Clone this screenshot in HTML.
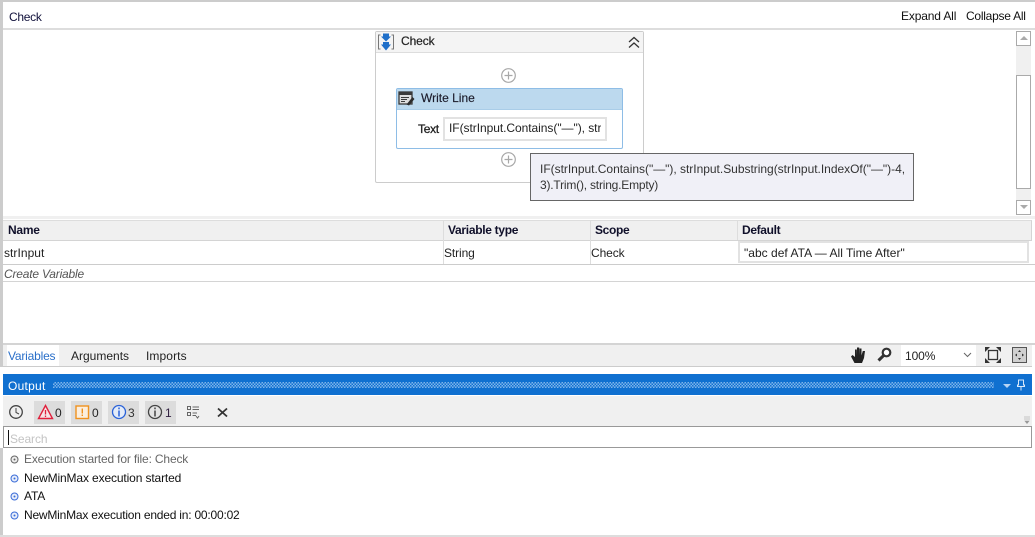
<!DOCTYPE html>
<html><head><meta charset="utf-8"><style>
html,body{margin:0;padding:0;background:#fff}
#p{position:relative;width:1035px;height:537px;overflow:hidden;background:#fff;font:12px "Liberation Sans",sans-serif;color:#111}
#p div,#p svg{position:absolute}
.t{white-space:nowrap;line-height:16px;height:16px}
.b{font-weight:bold}
</style></head><body><div id="p">
<div style="left:0;top:0;width:1035px;height:2px;background:#ccc"></div>
<div style="left:0;top:0;width:3px;height:344px;background:#ccc"></div>
<div style="left:3px;top:28px;width:1032px;height:2px;background:#ddd"></div>
<div class="t" style="left:9px;top:9px;letter-spacing:-.3px;color:#10103a">Check</div>
<div class="t" style="left:901px;top:8px;letter-spacing:-.15px">Expand All</div>
<div class="t" style="left:966px;top:8px;letter-spacing:-.25px">Collapse All</div>

<div style="left:1016px;top:45px;width:15px;height:155px;background:#f0f0f0"></div>
<div style="left:1016px;top:31px;width:13px;height:13px;border:1px solid #aaa;background:#fff"></div>
<svg style="left:1019px;top:35px" width="10" height="6"><path d="M1 5L5 1L9 5Z" fill="#aaa"/></svg>
<div style="left:1016px;top:75px;width:13px;height:112px;border:1px solid #aaa;background:#fff"></div>
<div style="left:1016px;top:200px;width:13px;height:13px;border:1px solid #aaa;background:#fff"></div>
<svg style="left:1019px;top:204px" width="10" height="6"><path d="M1 1L5 5L9 1Z" fill="#aaa"/></svg>

<div style="left:375px;top:31px;width:267px;height:150px;border:1px solid #ccc;border-radius:2px;background:#fff"></div>
<div style="left:376px;top:32px;width:267px;height:20px;background:#f4f4f4;border-bottom:1px solid #ddd"></div>
<svg style="left:377px;top:33px" width="18" height="18"><path d="M3.500 2H1.500V16H3.500M14.500 2H16.500V16H14.500" fill="none" stroke="#777" stroke-width="1"/><path d="M6 0.500H12V3.500H14L9 8.500L4 3.500H6ZM6 9H12V11.500H14L9 17.500L4 11.500H6Z" fill="#1f6fc9"/></svg>
<div class="t" style="left:401px;top:33px;-webkit-text-stroke:.2px #222;letter-spacing:-.1px;color:#222">Check</div>
<svg style="left:627px;top:36px" width="14" height="13"><path d="M2 6L7 1.500L12 6M2 11.500L7 7L12 11.500" fill="none" stroke="#333" stroke-width="1.300"/></svg>
<svg style="left:500px;top:67px" width="17" height="17"><circle cx="8.500" cy="8.500" r="6.800" fill="#fff" stroke="#a8a8a8" stroke-width="1.200"/><path d="M8.500 4.500V12.500M4.500 8.500H12.500" stroke="#a8a8a8" stroke-width="1.200"/></svg>
<svg style="left:500px;top:151px" width="17" height="17"><circle cx="8.500" cy="8.500" r="6.800" fill="#fff" stroke="#a8a8a8" stroke-width="1.200"/><path d="M8.500 4.500V12.500M4.500 8.500H12.500" stroke="#a8a8a8" stroke-width="1.200"/></svg>

<div style="left:396px;top:88px;width:225px;height:59px;border:1px solid #8ebde6;border-radius:2px;background:#fff"></div>
<div style="left:397px;top:89px;width:225px;height:20px;background:#bcd9ee;border-bottom:1px solid #a9cde8"></div>
<svg style="left:398px;top:90px" width="18" height="17"><rect x="1" y="2" width="13" height="12" fill="#ddd" stroke="#3a3a3a" stroke-width="1.300"/><rect x="1" y="2" width="13" height="3" fill="#3a3a3a"/><path d="M3 7.500H11M3 9.500H9M3 11.500H7" stroke="#3a3a3a"/><path d="M8.500 14.500L14.500 7L16.500 9L11 15.500Z" fill="#2c2c2c"/></svg>
<div class="t" style="left:421px;top:90px;-webkit-text-stroke:.15px #222;letter-spacing:0;color:#1a1a2e">Write Line</div>
<div class="t" style="left:418px;top:121px;-webkit-text-stroke:.3px #222;letter-spacing:-.3px;color:#222">Text</div>
<div style="left:443px;top:117px;width:160px;height:20px;border:2px solid #e2e2e2;background:#fff"></div>
<div class="t" style="left:449px;top:120px;width:152px;overflow:hidden;letter-spacing:-.05px;color:#222">IF(strInput.Contains("—"), str</div>

<div style="left:530px;top:153px;width:382px;height:46px;border:1px solid #666;background:#f0f0f7"></div>
<div class="t" style="left:540px;top:161px;letter-spacing:-.02px;color:#333">IF(strInput.Contains("—"), strInput.Substring(strInput.IndexOf("—")-4,</div>
<div class="t" style="left:540px;top:177px;letter-spacing:-.2px;color:#333">3).Trim(), string.Empty)</div>

<div style="left:3px;top:216px;width:1032px;height:3px;background:#f0f0f0"></div>
<div style="left:3px;top:220px;width:1028px;height:19px;background:#f0f0f0;border-top:1px solid #ddd;border-bottom:1px solid #d4d4d4;border-right:1px solid #d4d4d4"></div>
<div style="left:443px;top:221px;width:1px;height:44px;background:#ddd"></div>
<div style="left:590px;top:221px;width:1px;height:44px;background:#ddd"></div>
<div style="left:737px;top:221px;width:1px;height:19px;background:#ddd"></div>
<div class="t b" style="left:8px;top:222px;letter-spacing:-.25px;color:#10102a">Name</div>
<div class="t b" style="left:448px;top:222px;letter-spacing:-.3px;color:#10102a">Variable type</div>
<div class="t b" style="left:595px;top:222px;letter-spacing:-.35px;color:#10102a">Scope</div>
<div class="t b" style="left:742px;top:222px;letter-spacing:-.35px;color:#10102a">Default</div>
<div class="t" style="left:4px;top:245px;letter-spacing:.05px;color:#222">strInput</div>
<div class="t" style="left:444px;top:245px;letter-spacing:-.1px;color:#222">String</div>
<div class="t" style="left:591px;top:245px;letter-spacing:-.1px;color:#222">Check</div>
<div style="left:738px;top:241px;width:287px;height:18px;border:2px solid #e2e2e2;background:#fff"></div>
<div class="t" style="left:744px;top:245px;letter-spacing:.02px;color:#222">"abc def ATA — All Time After"</div>
<div style="left:3px;top:264px;width:1032px;height:1px;background:#ccc"></div>
<div class="t" style="left:4px;top:266px;font-style:italic;letter-spacing:-.2px;color:#555">Create Variable</div>
<div style="left:3px;top:281px;width:1032px;height:1px;background:#d4d4d4"></div>
<div style="left:3px;top:343px;width:1032px;height:2px;background:#d4d4d4"></div>

<div style="left:0;top:344px;width:3px;height:23px;background:#ccc"></div>
<div style="left:3px;top:345px;width:1029px;height:21px;background:#f0f0f0"></div>
<div style="left:0;top:366px;width:1032px;height:1px;background:#ccc"></div>
<div style="left:7px;top:345px;width:52px;height:21px;background:#fff"></div>
<div class="t" style="left:8px;top:348px;letter-spacing:-.2px;color:#2a6fc9">Variables</div>
<div class="t" style="left:71px;top:348px;letter-spacing:0;color:#222">Arguments</div>
<div class="t" style="left:146px;top:348px;letter-spacing:.1px;color:#222">Imports</div>
<svg style="left:850px;top:346px" width="17" height="18"><path d="M4.500 17L1 10.500L2.500 9L5 11V3.500H6.800L7 9V1.500H9.200L9.500 9V2.500H11.500V9.500L12.800 5H15L14 12L12 17Z" fill="#222"/></svg>
<svg style="left:877px;top:347px" width="15" height="16"><circle cx="9.500" cy="5.500" r="3.800" fill="#fff" stroke="#333" stroke-width="2.200"/><path d="M6.800 8.300L1.500 13.500" stroke="#333" stroke-width="3"/></svg>
<div style="left:901px;top:345px;width:75px;height:21px;background:#fff"></div>
<div class="t" style="left:905px;top:348px;letter-spacing:-.1px;color:#222">100%</div>
<svg style="left:963px;top:352px" width="9" height="6"><path d="M1 1L4.500 4.500L8 1" fill="none" stroke="#666"/></svg>
<svg style="left:985px;top:347px" width="16" height="16"><rect x="3.500" y="3.500" width="9" height="9" fill="none" stroke="#333" stroke-width="1.300"/><path d="M0 0H5L0 5ZM16 0H11L16 5ZM0 16H5L0 11ZM16 16H11L16 11Z" fill="#333"/></svg>
<svg style="left:1012px;top:347px" width="15" height="16"><rect x=".5" y=".5" width="14" height="15" fill="#d0d0d0" stroke="#555"/><path d="M7.500 3L6 5H9ZM7.500 13L6 11H9ZM3 8L5 6.500V9.500ZM12 8L10 6.500V9.500Z" fill="#333"/></svg>

<div style="left:3px;top:374px;width:1029px;height:21px;background:#1070d0"></div>
<div class="t" style="left:8px;top:378px;letter-spacing:.25px;color:#fff">Output</div>
<div style="left:53px;top:382px;width:941px;height:6px;background:repeating-conic-gradient(#7fb4ea 0 25%,#1070d0 0 50%) 0 0/3px 3px"></div>
<svg style="left:1002px;top:383px" width="10" height="6"><path d="M1 1H9L5 5Z" fill="#b8d4f4"/></svg>
<svg style="left:1016px;top:379px" width="10" height="12"><path d="M2.500 1H7.500V6H8.500V7.500H1.500V6H2.500ZM5 7.500V11.500" fill="none" stroke="#d8e8fa"/></svg>

<div style="left:3px;top:396px;width:1029px;height:30px;background:#f0f0f0"></div>
<svg style="left:8px;top:404px" width="16" height="16"><circle cx="8" cy="8" r="6.300" fill="#f0f0f0" stroke="#444" stroke-width="1.300"/><path d="M8 4V8.500L11 10" fill="none" stroke="#444"/></svg>
<div style="left:34px;top:401px;width:31px;height:23px;background:#dcdcdc"></div>
<svg style="left:37px;top:404px" width="17" height="16"><path d="M8.500 1.500L15.500 14.500H1.500Z" fill="#f6e4e6" stroke="#e0203c" stroke-width="1.400"/><path d="M8.500 6V10.500M8.500 11.500V13" stroke="#e0203c" stroke-width="1.300"/></svg>
<div class="t" style="left:55px;top:405px;color:#222">0</div>
<div style="left:71px;top:401px;width:31px;height:23px;background:#dcdcdc"></div>
<svg style="left:75px;top:405px" width="15" height="15"><rect x="1" y="1" width="12.500" height="12.500" fill="#fbeede" stroke="#f0921e" stroke-width="1.400"/><path d="M7.300 3.500V8.500M7.300 9.500V11" stroke="#f0921e" stroke-width="1.400"/></svg>
<div class="t" style="left:92px;top:405px;color:#222">0</div>
<div style="left:108px;top:401px;width:31px;height:23px;background:#dcdcdc"></div>
<svg style="left:111px;top:404px" width="16" height="16"><circle cx="8" cy="8" r="6.500" fill="#e4ecf8" stroke="#2a62d8" stroke-width="1.300"/><path d="M8 3.500V5.200M8 6.500V12.500" stroke="#2a62d8" stroke-width="1.500"/></svg>
<div class="t" style="left:128px;top:405px;color:#333">3</div>
<div style="left:145px;top:401px;width:31px;height:23px;background:#dcdcdc"></div>
<svg style="left:147px;top:404px" width="16" height="16"><circle cx="8" cy="8" r="6.500" fill="#e4e4e4" stroke="#444" stroke-width="1.300"/><path d="M8 3.500V5.200M8 6.500V12.500" stroke="#444" stroke-width="1.500"/></svg>
<div class="t" style="left:165px;top:405px;color:#302040">1</div>
<svg style="left:186px;top:405px" width="14" height="14"><path d="M1.500 1.500H4.500V4.500H1.500ZM1.500 7.500H4.500V10.500H1.500Z" fill="none" stroke="#666"/><path d="M6.500 2H13M6.500 4.500H13M6.500 8H11M6.500 10.500H10M10 11L11.500 13L13 11" fill="none" stroke="#666"/></svg>
<svg style="left:216px;top:406px" width="13" height="13"><path d="M2 2.500L11 10.500M11 2.500L2 10.500" stroke="#333" stroke-width="1.800"/></svg>
<svg style="left:1023px;top:416px" width="9" height="9"><path d="M1 1H7M1 3H7M2 5H6L4 7.500Z" fill="#999" stroke="#999" stroke-width=".6"/></svg>

<div style="left:3px;top:426px;width:1027px;height:20px;border:1px solid #999;background:#fff"></div>
<div style="left:8px;top:430px;width:1px;height:15px;background:#111"></div>
<div class="t" style="left:10px;top:431px;letter-spacing:-.1px;color:#c4c4c4">Search</div>

<svg style="left:10px;top:455px" width="9" height="9"><circle cx="4.500" cy="4.500" r="3.500" fill="#eee" stroke="#666"/><circle cx="4.500" cy="4.500" r="1" fill="#666"/></svg>
<div class="t" style="left:24px;top:451px;letter-spacing:-.16px;color:#666">Execution started for file: Check</div>
<svg style="left:10px;top:474px" width="9" height="9"><circle cx="4.500" cy="4.500" r="3.500" fill="#e8eefa" stroke="#3a6cd8"/><circle cx="4.500" cy="4.500" r="1" fill="#3a6cd8"/></svg>
<div class="t" style="left:24px;top:470px;letter-spacing:-.13px;color:#111">NewMinMax execution started</div>
<svg style="left:10px;top:492px" width="9" height="9"><circle cx="4.500" cy="4.500" r="3.500" fill="#e8eefa" stroke="#3a6cd8"/><circle cx="4.500" cy="4.500" r="1" fill="#3a6cd8"/></svg>
<div class="t" style="left:24px;top:488px;letter-spacing:-.13px;color:#111">ATA</div>
<svg style="left:10px;top:511px" width="9" height="9"><circle cx="4.500" cy="4.500" r="3.500" fill="#e8eefa" stroke="#3a6cd8"/><circle cx="4.500" cy="4.500" r="1" fill="#3a6cd8"/></svg>
<div class="t" style="left:24px;top:507px;letter-spacing:-.21px;color:#111">NewMinMax execution ended in: 00:00:02</div>
<div style="left:0;top:448px;width:3px;height:89px;background:#ccc"></div>
<div style="left:0;top:535px;width:1035px;height:2px;background:#ddd"></div>
</div></body></html>
